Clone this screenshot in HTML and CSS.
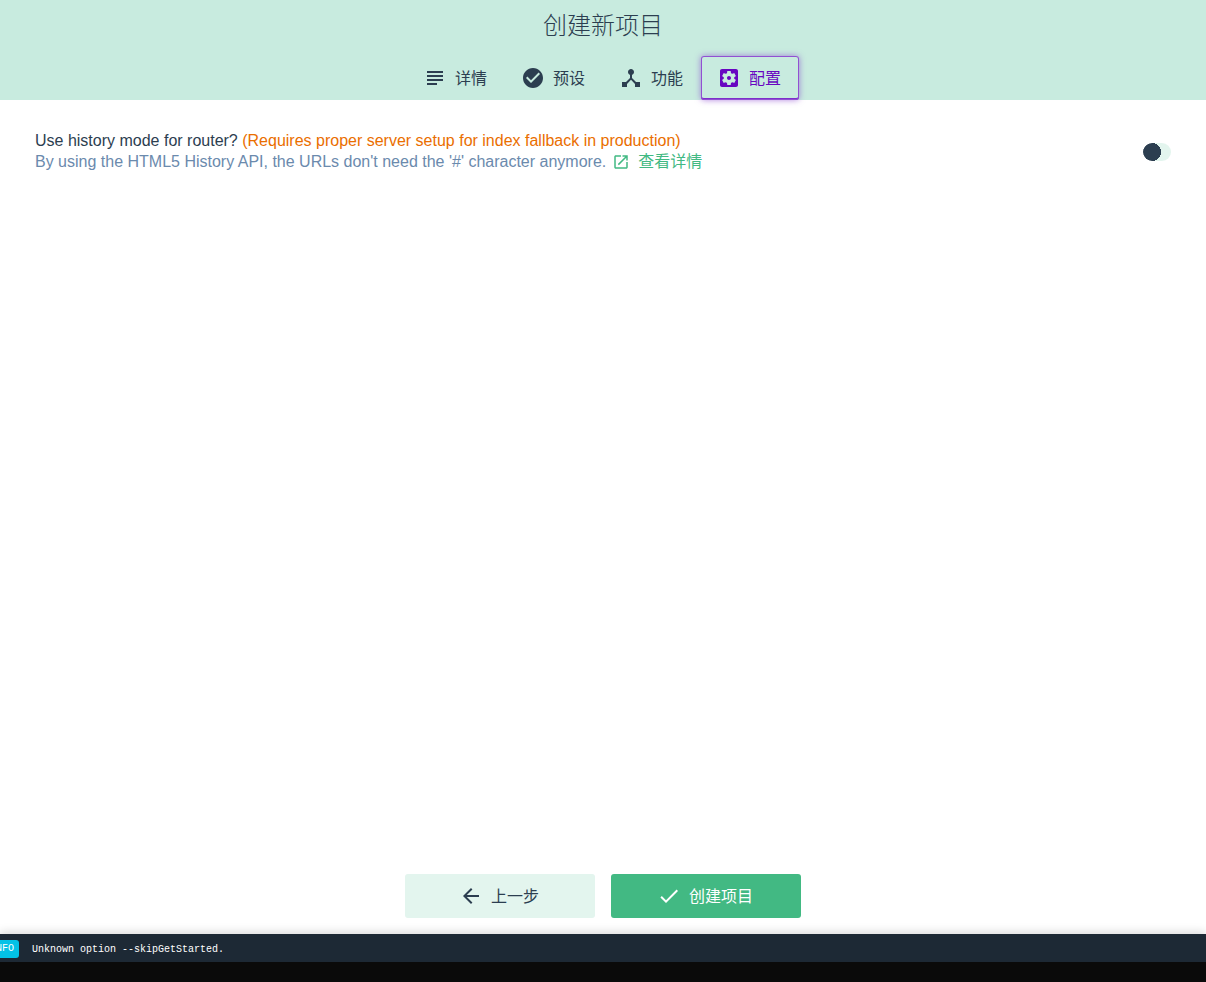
FILE: index.html
```html
<!DOCTYPE html>
<html lang="zh-CN">
<head>
<meta charset="utf-8">
<meta name="viewport" content="width=device-width, initial-scale=1">
<title>创建新项目</title>
<link rel="stylesheet" href="styles.css">
</head>
<body>
<div class="app">
  <header class="header">
    <h1 class="title">创建新项目</h1>
    <nav class="tabs">
      <button type="button" class="tab">
        <svg class="icon" viewBox="0 0 24 24" aria-hidden="true"><path d="M4 5h16v2H4zM4 9h16v2H4zM4 13h16v2H4zM4 17h10v2H4z"/></svg>
        <span>详情</span>
      </button>
      <button type="button" class="tab">
        <svg class="icon" viewBox="0 0 24 24" aria-hidden="true"><path d="M12 2C6.48 2 2 6.48 2 12s4.480 10 10 10 10-4.480 10-10S17.520 2 12 2zm-2 15l-5-5 1.410-1.410L10 14.170l7.590-7.590L19 8l-9 9z"/></svg>
        <span>预设</span>
      </button>
      <button type="button" class="tab">
        <svg class="icon" viewBox="0 0 24 24" aria-hidden="true"><path d="M17 16l-4-4V8.820C14.160 8.400 15 7.300 15 6c0-1.660-1.340-3-3-3S9 4.340 9 6c0 1.300.840 2.400 2 2.820V12l-4 4H3v5h5v-3.050l4-4.200 4 4.200V21h5v-5h-4z"/></svg>
        <span>功能</span>
      </button>
      <button type="button" class="tab tab-active" aria-current="page">
        <svg class="icon" viewBox="0 0 24 24" aria-hidden="true"><path d="M12 10c-1.100 0-2 .9-2 2s.9 2 2 2 2-.9 2-2-.9-2-2-2zm7-7H5c-1.110 0-2 .9-2 2v14c0 1.100.890 2 2 2h14c1.110 0 2-.9 2-2V5c0-1.100-.890-2-2-2zm-1.750 9c0 .230-.020.460-.050.680l1.480 1.160c.130.110.170.300.080.450l-1.400 2.420c-.090.150-.270.210-.430.150l-1.740-.7c-.360.280-.760.510-1.180.690l-.260 1.850c-.030.170-.180.300-.350.300h-2.800c-.170 0-.320-.130-.350-.290l-.260-1.850c-.430-.180-.820-.410-1.180-.690l-1.740.7c-.160.060-.340 0-.430-.150l-1.400-2.420c-.090-.150-.050-.340.080-.450l1.480-1.160c-.030-.230-.050-.460-.050-.690s.020-.460.050-.680l-1.480-1.160c-.130-.110-.170-.300-.080-.450l1.400-2.420c.090-.150.270-.210.430-.150l1.740.7c.360-.280.760-.510 1.180-.690l.260-1.850c.030-.170.180-.300.350-.300h2.800c.170 0 .320.130.350.290l.260 1.850c.430.180.820.410 1.180.690l1.740-.7c.160-.060.340 0 .430.150l1.400 2.420c.090.150.050.340-.080.450l-1.480 1.160c.030.230.050.460.050.690z"/></svg>
        <span>配置</span>
      </button>
    </nav>
  </header>
  <main class="content">
    <div class="option">
      <div class="option-text">
        <label class="option-name" for="history">Use history mode for router? <span class="warning">(Requires proper server setup for index fallback in production)</span></label>
        <div class="description">
          <span>By using the HTML5 History API, the URLs don't need the '#' character anymore.</span>
          <a class="more" href="#details">
            <svg class="icon icon-small" viewBox="0 0 24 24" aria-hidden="true"><path d="M19 19H5V5h7V3H5c-1.110 0-2 .9-2 2v14c0 1.100.890 2 2 2h14c1.100 0 2-.9 2-2v-7h-2v7zM14 3v2h3.590l-9.830 9.830 1.410 1.410L19 6.410V10h2V3h-7z"/></svg>
            <span>查看详情</span>
          </a>
        </div>
      </div>
      <input class="switch" id="history" type="checkbox" role="switch">
    </div>
  </main>
  <div class="actions">
    <button type="button" class="button">
      <svg class="icon" viewBox="0 0 24 24" aria-hidden="true"><path d="M20 11H7.830l5.590-5.590L12 4l-8 8 8 8 1.410-1.410L7.830 13H20v-2z"/></svg>
      <span>上一步</span>
    </button>
    <button type="button" class="button button-primary">
      <svg class="icon" viewBox="0 0 24 24" aria-hidden="true"><path d="M9 16.170L4.830 12l-1.420 1.410L9 19 21 7l-1.410-1.410z"/></svg>
      <span>创建项目</span>
    </button>
  </div>
  <div class="status">
    <span class="badge">INFO</span>
    <span>Unknown option --skipGetStarted.</span>
  </div>
  <div class="footer"></div>
</div>
</body>
</html>
```
FILE: styles.css
```css
* {
  box-sizing: border-box;
}

body {
  margin: 0;
  background: #fff;
  color: #2c3e50;
  font-family: "Liberation Sans", "Noto Sans CJK SC", sans-serif;
  font-size: 16px;
  line-height: 21px;
}

button {
  font: inherit;
  color: inherit;
  border: 0;
  cursor: pointer;
}

.app {
  display: flex;
  flex-direction: column;
  min-height: 100vh;
}

.icon {
  flex: none;
  width: 24px;
  height: 24px;
  fill: currentColor;
}

.icon-small {
  width: 18px;
  height: 18px;
}

.header {
  display: flex;
  flex-direction: column;
  align-items: center;
  gap: 14px;
  padding-top: 10px;
  background: #c8ebdf;
}

.title {
  margin: 0;
  font-size: 24px;
  font-weight: 300;
  line-height: 32px;
}

.tabs {
  display: flex;
}

.tab {
  display: flex;
  align-items: center;
  gap: 8px;
  height: 44px;
  padding: 0 18px 0 16px;
  background: none;
}

.tab-active {
  color: #6806c1;
  border-radius: 3px;
  box-shadow: inset 0 0 0 1px #9150d2, inset 0 -2px 0 #7d2fca, 0 0 6px #8033cc99;
}

.content {
  flex: 1;
  padding: 30px 35px;
}

.option {
  display: flex;
  align-items: center;
  justify-content: space-between;
  gap: 16px;
}

.warning {
  color: #ea6e00;
}

.description {
  display: flex;
  flex-wrap: wrap;
  column-gap: 6px;
  color: #6b8aad;
}

.more {
  display: flex;
  align-items: center;
  gap: 8px;
  color: #42b983;
  text-decoration: none;
}

.switch {
  appearance: none;
  flex: none;
  width: 28px;
  height: 18px;
  margin: 2px 0 0;
  border-radius: 9px;
  background: radial-gradient(circle at 9px 9px, #2c3e50 8px, #2c3e50 9px, #e3f5ee 9px);
}

.switch:checked {
  background: radial-gradient(circle at 19px 9px, #42b983 9px, #e3f5ee 9px);
}

.actions {
  display: flex;
  justify-content: center;
  gap: 16px;
  padding: 16px;
}

.button {
  display: flex;
  align-items: center;
  justify-content: center;
  gap: 8px;
  width: 190px;
  height: 44px;
  padding: 0 2px 0 0;
  border-radius: 3px;
  background: #e3f5ee;
}

.button-primary {
  background: #42b983;
  color: #fff;
}

.status {
  display: flex;
  align-items: center;
  gap: 13px;
  height: 28px;
  padding-top: 2px;
  overflow: hidden;
  background: #1d2935;
  box-shadow: 0 -2px 10px #00000026;
  color: #fff;
  font-family: "Liberation Mono", monospace;
  font-size: 10px;
}

.badge {
  margin-left: -15px;
  padding: 0 5px;
  border-radius: 3px;
  background: #03c2e6;
  line-height: 18px;
}

.footer {
  height: 20px;
  background: #0a0a0a;
}
```
